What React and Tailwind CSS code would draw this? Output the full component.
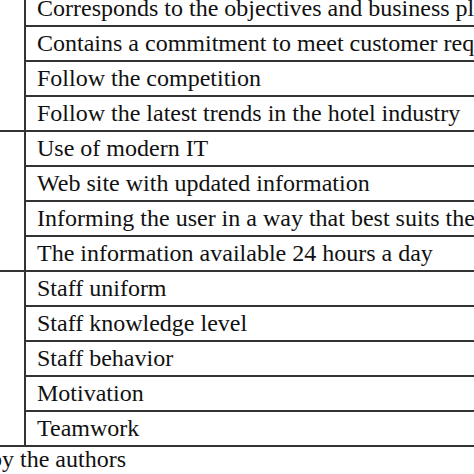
const groups = [
  [
    "Corresponds to the objectives and business plan",
    "Contains a commitment to meet customer requirements",
    "Follow the competition",
    "Follow the latest trends in the hotel industry",
  ],
  [
    "Use of modern IT",
    "Web site with updated information",
    "Informing the user in a way that best suits them",
    "The information available 24 hours a day",
  ],
  [
    "Staff uniform",
    "Staff knowledge level",
    "Staff behavior",
    "Motivation",
    "Teamwork",
  ],
];

const App = () => {
  return (
    <div
      className="w-[474px] h-[474px] overflow-hidden bg-white text-[#111]"
      style={{ fontFamily: '"Liberation Serif", "Times New Roman", serif' }}
    >
      <div className="-mt-[8px] w-[700px]">
        {groups.map((rows, gi) => (
          <div key={gi} className="flex border-b-2 border-[#333]">
            <div className="w-[26px] shrink-0 border-r-2 border-[#333]" />
            <div className="flex-1">
              {rows.map((row, ri) => (
                <div
                  key={row}
                  className={
                    ri < rows.length - 1
                      ? "h-[35px] border-b-2 border-[#333] pl-[11px] text-[24px] leading-[33px] whitespace-nowrap"
                      : "h-[33px] pl-[11px] text-[24px] leading-[33px] whitespace-nowrap"
                  }
                >
                  {row}
                </div>
              ))}
            </div>
          </div>
        ))}
        <p className="-ml-[10px] text-[24px] leading-[24px] whitespace-nowrap">
          by the authors
        </p>
      </div>
    </div>
  );
};

export default App;
